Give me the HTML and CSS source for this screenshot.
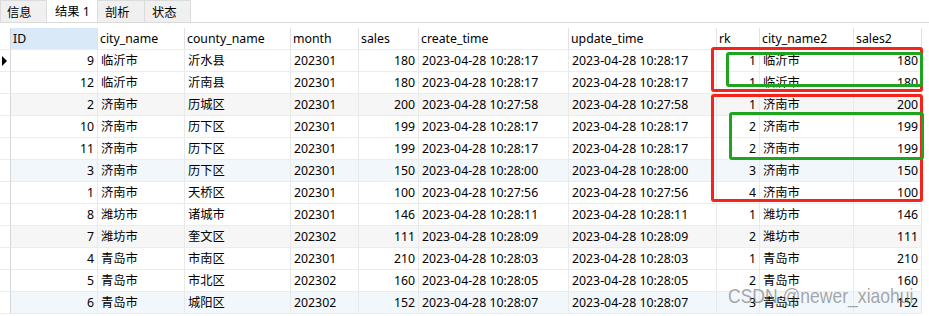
FILE: index.html
```html
<!DOCTYPE html>
<html lang="zh-CN">
<head>
    <meta charset="UTF-8">
    <title>结果 1</title>
    <link rel="stylesheet" href="styles.css">
</head>
<body>
    <div class="page">
        <div class="tabs">
            <div class="tab first">信息</div>
            <div class="tab active">结果 1</div>
            <div class="tab">剖析</div>
            <div class="tab last">状态</div>
        </div>

        <div class="grid">
            <div class="row head">
                <div class="cell ind"></div>
                <div class="cell sel">ID</div>
                <div class="cell">city_name</div>
                <div class="cell">county_name</div>
                <div class="cell">month</div>
                <div class="cell">sales</div>
                <div class="cell">create_time</div>
                <div class="cell">update_time</div>
                <div class="cell">rk</div>
                <div class="cell">city_name2</div>
                <div class="cell">sales2</div>
            </div>

            <div class="row">
                <div class="cell ind"><span class="arrow"></span></div>
                <div class="cell num">9</div><div class="cell">临沂市</div><div class="cell">沂水县</div>
                <div class="cell">202301</div><div class="cell num">180</div>
                <div class="cell">2023-04-28 10:28:17</div><div class="cell">2023-04-28 10:28:17</div>
                <div class="cell num">1</div><div class="cell">临沂市</div><div class="cell num">180</div>
            </div>
            <div class="row">
                <div class="cell ind"></div>
                <div class="cell num">12</div><div class="cell">临沂市</div><div class="cell">沂南县</div>
                <div class="cell">202301</div><div class="cell num">180</div>
                <div class="cell">2023-04-28 10:28:17</div><div class="cell">2023-04-28 10:28:17</div>
                <div class="cell num">1</div><div class="cell">临沂市</div><div class="cell num">180</div>
            </div>
            <div class="row gray">
                <div class="cell ind"></div>
                <div class="cell num">2</div><div class="cell">济南市</div><div class="cell">历城区</div>
                <div class="cell">202301</div><div class="cell num">200</div>
                <div class="cell">2023-04-28 10:27:58</div><div class="cell">2023-04-28 10:27:58</div>
                <div class="cell num">1</div><div class="cell">济南市</div><div class="cell num">200</div>
            </div>
            <div class="row">
                <div class="cell ind"></div>
                <div class="cell num">10</div><div class="cell">济南市</div><div class="cell">历下区</div>
                <div class="cell">202301</div><div class="cell num">199</div>
                <div class="cell">2023-04-28 10:28:17</div><div class="cell">2023-04-28 10:28:17</div>
                <div class="cell num">2</div><div class="cell">济南市</div><div class="cell num">199</div>
            </div>
            <div class="row">
                <div class="cell ind"></div>
                <div class="cell num">11</div><div class="cell">济南市</div><div class="cell">历下区</div>
                <div class="cell">202301</div><div class="cell num">199</div>
                <div class="cell">2023-04-28 10:28:17</div><div class="cell">2023-04-28 10:28:17</div>
                <div class="cell num">2</div><div class="cell">济南市</div><div class="cell num">199</div>
            </div>
            <div class="row blue">
                <div class="cell ind"></div>
                <div class="cell num">3</div><div class="cell">济南市</div><div class="cell">历下区</div>
                <div class="cell">202301</div><div class="cell num">150</div>
                <div class="cell">2023-04-28 10:28:00</div><div class="cell">2023-04-28 10:28:00</div>
                <div class="cell num">3</div><div class="cell">济南市</div><div class="cell num">150</div>
            </div>
            <div class="row">
                <div class="cell ind"></div>
                <div class="cell num">1</div><div class="cell">济南市</div><div class="cell">天桥区</div>
                <div class="cell">202301</div><div class="cell num">100</div>
                <div class="cell">2023-04-28 10:27:56</div><div class="cell">2023-04-28 10:27:56</div>
                <div class="cell num">4</div><div class="cell">济南市</div><div class="cell num">100</div>
            </div>
            <div class="row">
                <div class="cell ind"></div>
                <div class="cell num">8</div><div class="cell">潍坊市</div><div class="cell">诸城市</div>
                <div class="cell">202301</div><div class="cell num">146</div>
                <div class="cell">2023-04-28 10:28:11</div><div class="cell">2023-04-28 10:28:11</div>
                <div class="cell num">1</div><div class="cell">潍坊市</div><div class="cell num">146</div>
            </div>
            <div class="row gray">
                <div class="cell ind"></div>
                <div class="cell num">7</div><div class="cell">潍坊市</div><div class="cell">奎文区</div>
                <div class="cell">202302</div><div class="cell num">111</div>
                <div class="cell">2023-04-28 10:28:09</div><div class="cell">2023-04-28 10:28:09</div>
                <div class="cell num">2</div><div class="cell">潍坊市</div><div class="cell num">111</div>
            </div>
            <div class="row">
                <div class="cell ind"></div>
                <div class="cell num">4</div><div class="cell">青岛市</div><div class="cell">市南区</div>
                <div class="cell">202301</div><div class="cell num">210</div>
                <div class="cell">2023-04-28 10:28:03</div><div class="cell">2023-04-28 10:28:03</div>
                <div class="cell num">1</div><div class="cell">青岛市</div><div class="cell num">210</div>
            </div>
            <div class="row">
                <div class="cell ind"></div>
                <div class="cell num">5</div><div class="cell">青岛市</div><div class="cell">市北区</div>
                <div class="cell">202302</div><div class="cell num">160</div>
                <div class="cell">2023-04-28 10:28:05</div><div class="cell">2023-04-28 10:28:05</div>
                <div class="cell num">2</div><div class="cell">青岛市</div><div class="cell num">160</div>
            </div>
            <div class="row blue">
                <div class="cell ind"></div>
                <div class="cell num">6</div><div class="cell">青岛市</div><div class="cell">城阳区</div>
                <div class="cell">202302</div><div class="cell num">152</div>
                <div class="cell">2023-04-28 10:28:07</div><div class="cell">2023-04-28 10:28:07</div>
                <div class="cell num">3</div><div class="cell">青岛市</div><div class="cell num">152</div>
            </div>
        </div>

        <!-- hand-drawn annotation boxes -->
        <div class="mark red mark-a"></div>
        <div class="mark green mark-b"></div>
        <div class="mark red mark-c"></div>
        <div class="mark green mark-d"></div>

        <div class="watermark">CSDN @newer_xiaohui</div>
    </div>
</body>
</html>
```

FILE: styles.css
```css
body {
    margin: 0;
    background: #fff;
    font-family: "Noto Sans", "Noto Sans CJK SC", sans-serif;
    font-size: 12.3px;
    color: #000;
}

.page {
    position: relative;
    width: 929px;
    height: 316px;
    overflow: hidden;
}

/* tab strip */
.tabs {
    display: flex;
    height: 22px;
    border-bottom: 1px solid #dadada;
}

.tab {
    box-sizing: border-box;
    width: 47px;
    height: 22px;
    padding: 1px 0 0 7px;
    line-height: 21px;
    background: #f0f0f0;
    border-top: 1px solid #dcdcdc;
    border-right: 1px solid #dcdcdc;
}

.tab.first {
    border-left: 1px solid #dcdcdc;
    padding-left: 6px;
}

.tab.active {
    width: 51px;
    padding-left: 8px;
    background: #fff;
    border-top: none;
}

.tab.last {
    width: 46px;
}

/* result grid */
.grid {
    margin-top: 5px;
}

.row {
    display: grid;
    grid-template-columns: 11px 87px 87px 106px 68px 60px 150px 148px 43px 94px 68px;
    height: 22px;
}

.cell {
    box-sizing: border-box;
    height: 22px;
    padding: 0 3px;
    line-height: 21px;
    white-space: nowrap;
    overflow: hidden;
    border-right: 1px solid #e9e9e9;
    border-bottom: 1px solid #ececec;
}

.row.gray .cell {
    background: #f6f6f6;
}

.row.blue .cell {
    background: #f2f7fc;
}

.row .cell.ind {
    padding: 0;
    background: #fff;
    border-right-color: #d6d6d6;
    display: flex;
    align-items: center;
}

.head .cell {
    border-right-color: #e2e2e2;
    padding-left: 2px;
}

.head .cell.sel {
    background: #d9e9f7;
}

.num {
    text-align: right;
}

.arrow {
    width: 0;
    height: 0;
    margin-left: 2px;
    border-left: 5px solid #000;
    border-top: 5px solid transparent;
    border-bottom: 5px solid transparent;
}

/* annotation boxes drawn over the grid */
.mark {
    position: absolute;
    box-sizing: border-box;
    border: 3px solid;
    border-radius: 3px;
}

.red {
    border-color: #f5231a;
}

.green {
    border-color: #1fa41f;
}

.mark-a {
    left: 711px;
    top: 47px;
    width: 212px;
    height: 45px;
}

.mark-b {
    left: 726px;
    top: 52px;
    width: 197px;
    height: 35px;
}

.mark-c {
    left: 711px;
    top: 94px;
    width: 212px;
    height: 108px;
}

.mark-d {
    left: 729px;
    top: 112px;
    width: 195px;
    height: 48px;
}

.watermark {
    position: absolute;
    left: 728px;
    top: 285px;
    font-family: "Liberation Sans", Arial, sans-serif;
    font-size: 21px;
    line-height: 21px;
    color: rgba(95, 95, 95, 0.55);
    transform: scaleX(0.835);
    transform-origin: left top;
    white-space: nowrap;
}
```
